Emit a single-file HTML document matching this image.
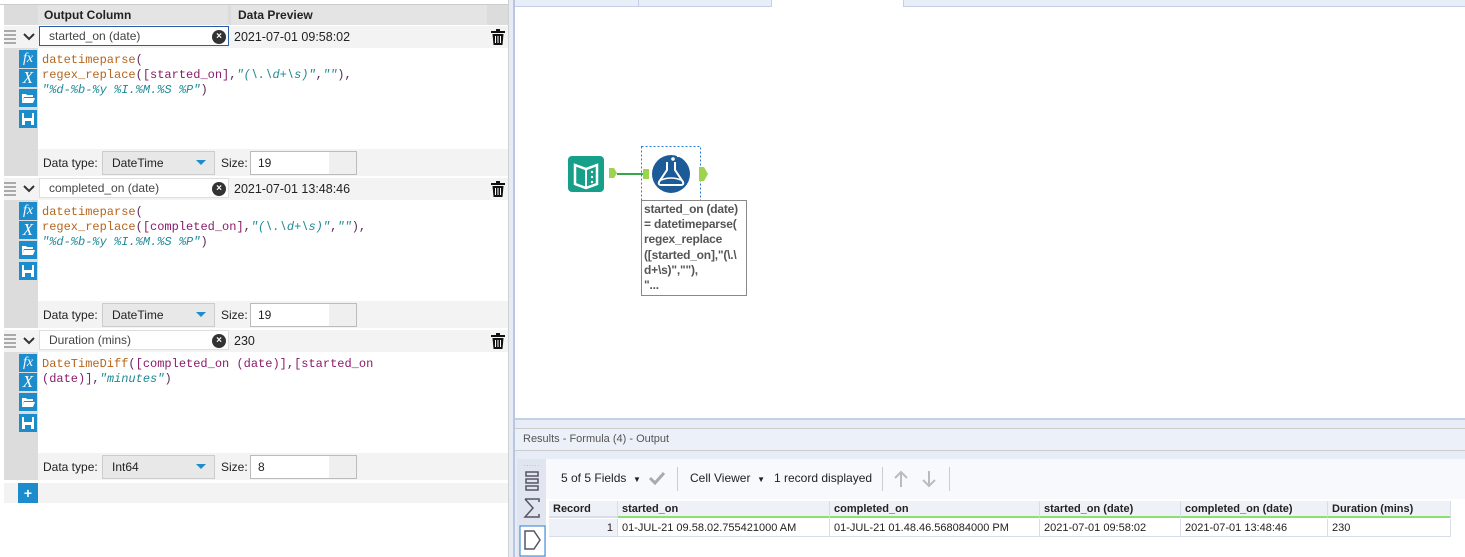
<!DOCTYPE html>
<html><head><meta charset="utf-8">
<style>
*{box-sizing:border-box;margin:0;padding:0}
body{width:1465px;height:557px;position:relative;overflow:hidden;background:#fff;font-family:"Liberation Sans",sans-serif;font-size:12px;color:#222}
.a{position:absolute}
.code{font-family:"Liberation Mono",monospace;font-size:12px;line-height:15px;white-space:pre}
.fn{color:#b5651d}.fd{color:#8b1a6b}.st{color:#1f8a96;font-style:italic}.p{color:#5a2a5a}
.ico{position:absolute;left:19px;width:18px;height:18px;background:#1c8ccc;color:#fff;text-align:center;font-family:"Liberation Serif",serif;font-style:italic;font-size:14px;line-height:18px}
.hdl{position:absolute;left:4px;width:12px;height:2px;background:#aaa}
.inp{position:absolute;left:39px;width:190px;height:20px;background:#fff;border:1px solid #ddd;padding-left:9px;line-height:18px;color:#444}
.clr{position:absolute;left:212px;width:14px;height:14px;border-radius:50%;background:#333;color:#fff;font-size:10px;line-height:14px;text-align:center;font-weight:bold}
.dd{position:absolute;left:102px;width:113px;height:24px;background:#e8e8e8;border:1px solid #ccc;padding-left:9px;line-height:22px}
.sz{position:absolute;left:250px;width:107px;height:24px;background:#fff;border:1px solid #bbb;padding-left:7px;line-height:22px}
.th{position:absolute;top:501px;height:17px;background:#eef1f8;border-right:1px solid #d8ddea;font-weight:bold;font-size:11px;line-height:16px;padding-left:4px;border-bottom:2px solid #8de070}
.td{position:absolute;top:519px;height:18px;background:#fff;border-right:1px solid #d8ddea;border-bottom:1px solid #d8ddea;font-size:11px;line-height:18px;padding-left:4px}
</style></head><body>

<svg width="0" height="0" style="position:absolute">
<defs>
<symbol id="trash" viewBox="0 0 14 16"><rect x="0" y="2" width="14" height="2" fill="#111"/><rect x="5" y="0" width="4" height="2" fill="#111"/><path d="M1.5 5 h11 l-1 11 h-9z" fill="#111"/><path d="M4.5 7 v7 M7 7 v7 M9.5 7 v7" stroke="#fff" stroke-width="1"/></symbol>
<symbol id="chev" viewBox="0 0 12 8"><path d="M1 1 L6 6 L11 1" fill="none" stroke="#333" stroke-width="2"/></symbol>
<symbol id="fold" viewBox="0 0 18 18"><rect width="18" height="18" fill="#1c8ccc"/><path d="M3 5 h4 l1 1 h6 v2 h-9 l-2 6 z" fill="#fff"/><path d="M5 9 h11 l-2 5 h-11z" fill="#fff"/></symbol>
<symbol id="save" viewBox="0 0 18 18"><rect width="18" height="18" fill="#1c8ccc"/><rect x="3" y="3" width="12" height="12" fill="#fff"/><rect x="5" y="3" width="8" height="5" fill="#1c8ccc"/><rect x="6" y="11" width="6" height="4" fill="#1c8ccc"/></symbol>
</defs></svg>

<!-- LEFT PANEL -->
<div class="a" style="left:0;top:0;width:508px;height:5px;background:#fff;border-bottom:1px solid #ccc"></div>
<div class="a" style="left:4px;top:5px;width:504px;height:20px;background:#dcdcdc"></div>
<div class="a" style="left:38px;top:5px;width:190px;height:20px;background:#e4e4e4;font-weight:bold;padding-left:6px;line-height:20px">Output Column</div>
<div class="a" style="left:231px;top:5px;width:256px;height:20px;background:#e4e4e4;font-weight:bold;padding-left:7px;line-height:20px">Data Preview</div>

<div class="a" style="left:4px;top:26px;width:504px;height:150px;background:#f3f3f3"></div>
<div class="a" style="left:4px;top:178px;width:504px;height:150px;background:#f3f3f3"></div>
<div class="a" style="left:4px;top:330px;width:504px;height:150px;background:#f3f3f3"></div>
<div class="a" style="left:4px;top:483px;width:504px;height:20px;background:#f3f3f3"></div>

<div class="a" style="left:4px;top:48px;width:34px;height:128px;background:#dcdcdc"></div>
<div class="a" style="left:4px;top:200px;width:34px;height:128px;background:#dcdcdc"></div>
<div class="a" style="left:4px;top:352px;width:34px;height:128px;background:#dcdcdc"></div>
<div class="a" style="left:38px;top:48px;width:470px;height:101px;background:#fff"></div>
<div class="a" style="left:38px;top:200px;width:470px;height:101px;background:#fff"></div>
<div class="a" style="left:38px;top:352px;width:470px;height:101px;background:#fff"></div>
<div class="a" style="left:38px;top:149px;width:470px;height:27px;background:#f3f3f3"></div>
<div class="a" style="left:38px;top:301px;width:470px;height:27px;background:#f3f3f3"></div>
<div class="a" style="left:38px;top:453px;width:470px;height:27px;background:#f3f3f3"></div>

<!-- Row 1 -->
<div class="hdl" style="top:30px"></div><div class="hdl" style="top:34px"></div><div class="hdl" style="top:38px"></div><div class="hdl" style="top:42px"></div>
<svg class="a" style="left:23px;top:33px" width="12" height="8"><use href="#chev"/></svg>
<div class="inp" style="top:26px;border-color:#2a5ca8">started_on (date)</div>
<div class="clr" style="top:30px">×</div>
<div class="a" style="left:234px;top:30px;font-size:12.5px">2021-07-01 09:58:02</div>
<svg class="a" style="left:491px;top:29px" width="14" height="16"><use href="#trash"/></svg>
<div class="ico" style="top:50px">fx</div><div class="ico" style="top:69px;font-size:17px">X</div>
<svg class="a" style="left:19px;top:89px" width="18" height="18"><use href="#fold"/></svg>
<svg class="a" style="left:19px;top:110px" width="18" height="18"><use href="#save"/></svg>
<div class="a code" style="left:42px;top:53px"><span class="fn">datetimeparse</span><span class="p">(</span>
<span class="fn">regex_replace</span><span class="p">(</span><span class="fd">[started_on]</span><span class="p">,</span><span class="st">"(\.\d+\s)"</span><span class="p">,</span><span class="st">""</span><span class="p">),</span>
<span class="st">"%d-%b-%y %I.%M.%S %P"</span><span class="p">)</span></div>
<div class="a" style="left:43px;top:156px">Data type:</div>
<div class="dd" style="top:151px">DateTime</div>
<div class="a" style="left:196px;top:160px;border:5px solid transparent;border-top:5px solid #1c8ccc;width:0;height:0"></div>
<div class="a" style="left:221px;top:156px">Size:</div>
<div class="sz" style="top:151px">19</div>
<div class="a" style="left:329px;top:152px;width:27px;height:22px;background:#efefef"></div>

<!-- Row 2 -->
<div class="hdl" style="top:182px"></div><div class="hdl" style="top:186px"></div><div class="hdl" style="top:190px"></div><div class="hdl" style="top:194px"></div>
<svg class="a" style="left:23px;top:185px" width="12" height="8"><use href="#chev"/></svg>
<div class="inp" style="top:178px">completed_on (date)</div>
<div class="clr" style="top:182px">×</div>
<div class="a" style="left:234px;top:182px;font-size:12.5px">2021-07-01 13:48:46</div>
<svg class="a" style="left:491px;top:181px" width="14" height="16"><use href="#trash"/></svg>
<div class="ico" style="top:202px">fx</div><div class="ico" style="top:221px;font-size:17px">X</div>
<svg class="a" style="left:19px;top:241px" width="18" height="18"><use href="#fold"/></svg>
<svg class="a" style="left:19px;top:262px" width="18" height="18"><use href="#save"/></svg>
<div class="a code" style="left:42px;top:205px"><span class="fn">datetimeparse</span><span class="p">(</span>
<span class="fn">regex_replace</span><span class="p">(</span><span class="fd">[completed_on]</span><span class="p">,</span><span class="st">"(\.\d+\s)"</span><span class="p">,</span><span class="st">""</span><span class="p">),</span>
<span class="st">"%d-%b-%y %I.%M.%S %P"</span><span class="p">)</span></div>
<div class="a" style="left:43px;top:308px">Data type:</div>
<div class="dd" style="top:303px">DateTime</div>
<div class="a" style="left:196px;top:312px;border:5px solid transparent;border-top:5px solid #1c8ccc;width:0;height:0"></div>
<div class="a" style="left:221px;top:308px">Size:</div>
<div class="sz" style="top:303px">19</div>
<div class="a" style="left:329px;top:304px;width:27px;height:22px;background:#efefef"></div>

<!-- Row 3 -->
<div class="hdl" style="top:334px"></div><div class="hdl" style="top:338px"></div><div class="hdl" style="top:342px"></div><div class="hdl" style="top:346px"></div>
<svg class="a" style="left:23px;top:337px" width="12" height="8"><use href="#chev"/></svg>
<div class="inp" style="top:330px">Duration (mins)</div>
<div class="clr" style="top:334px">×</div>
<div class="a" style="left:234px;top:334px;font-size:12.5px">230</div>
<svg class="a" style="left:491px;top:333px" width="14" height="16"><use href="#trash"/></svg>
<div class="ico" style="top:354px">fx</div><div class="ico" style="top:373px;font-size:17px">X</div>
<svg class="a" style="left:19px;top:393px" width="18" height="18"><use href="#fold"/></svg>
<svg class="a" style="left:19px;top:414px" width="18" height="18"><use href="#save"/></svg>
<div class="a code" style="left:42px;top:357px"><span class="fn">DateTimeDiff</span><span class="p">(</span><span class="fd">[completed_on (date)]</span><span class="p">,</span><span class="fd">[started_on</span>
<span class="fd">(date)]</span><span class="p">,</span><span class="st">"minutes"</span><span class="p">)</span></div>
<div class="a" style="left:43px;top:460px">Data type:</div>
<div class="dd" style="top:455px">Int64</div>
<div class="a" style="left:196px;top:464px;border:5px solid transparent;border-top:5px solid #1c8ccc;width:0;height:0"></div>
<div class="a" style="left:221px;top:460px">Size:</div>
<div class="sz" style="top:455px">8</div>
<div class="a" style="left:329px;top:456px;width:27px;height:22px;background:#efefef"></div>

<div class="a" style="left:18px;top:483px;width:20px;height:20px;background:#1c8ccc;color:#fff;text-align:center;font-weight:bold;line-height:20px;font-size:14px">+</div>

<!-- divider -->
<div class="a" style="left:508px;top:0;width:7px;height:557px;background:#e6ebf5;border-left:1px solid #d0d0d0;border-right:2px solid #b8c6e2"></div>

<!-- CANVAS -->
<div class="a" style="left:515px;top:0;width:257px;height:7px;background:#e8eef8;border-bottom:1px solid #c5d0e6;border-right:1px solid #c5d0e6"></div>
<div class="a" style="left:638px;top:0;width:1px;height:6px;background:#c5d0e6"></div>
<div class="a" style="left:903px;top:0;width:562px;height:7px;background:#e8eef8;border-bottom:1px solid #c5d0e6;border-left:1px solid #c5d0e6"></div>

<svg class="a" style="left:555px;top:140px" width="200" height="160">
  <rect x="13" y="16" width="36" height="36" rx="4" fill="#16a08a"/>
  <path d="M20 25 L31 29 L42 25 L42 44 L31 48 L20 44 Z" fill="none" stroke="#fff" stroke-width="2.5"/>
  <line x1="31" y1="29" x2="31" y2="48" stroke="#fff" stroke-width="2"/>
  <circle cx="37" cy="32" r="1.2" fill="#fff"/><circle cx="37" cy="37" r="1.2" fill="#fff"/><circle cx="37" cy="42" r="1.2" fill="#fff"/>
  <path d="M54 28 h5 l3 5 l-3 5 h-5z" fill="#9dd44f"/>
  <line x1="62" y1="34" x2="88" y2="34" stroke="#3aa64a" stroke-width="2"/>
  <rect x="88" y="29" width="6" height="10" fill="#9dd44f"/>
  <rect x="86.5" y="6.5" width="59" height="54" fill="none" stroke="#2a7fd4" stroke-dasharray="2,2"/>
  <circle cx="116" cy="34" r="19" fill="#1c5a98"/>
  <path d="M112 22 v8 l-8 12 q-1 3 2 3 h20 q3 0 2-3 l-8-12 v-8" fill="none" stroke="#fff" stroke-width="2"/>
  <path d="M106 40 q10 -4 20 0" fill="none" stroke="#fff" stroke-width="1.5"/>
  <circle cx="118" cy="19" r="1.8" fill="#fff"/><circle cx="123" cy="16" r="1.2" fill="#fff"/>
  <path d="M144 27 h5 l4 7 l-4 7 h-5z" fill="#9dd44f"/>
  <rect x="86.5" y="60.5" width="105" height="95" fill="#fff" stroke="#888"/>
</svg>
<div class="a" style="left:644px;top:202px;width:104px;font-size:12px;line-height:15.2px;color:#555;font-weight:bold;letter-spacing:-0.2px">started_on (date)<br>= datetimeparse(<br>regex_replace<br>([started_on],"(\.\<br>d+\s)",""),<br>"...</div>

<!-- RESULTS -->
<div class="a" style="left:515px;top:418px;width:950px;height:139px;background:#e8ecf6;border-top:2px solid #c5d0e6"></div>
<div class="a" style="left:515px;top:428px;width:950px;height:23px;background:#ecf0f8;border-top:1px solid #ccc;border-bottom:1px solid #ccc;padding-left:8px;line-height:21px;font-size:11px;color:#555">Results - Formula (4) - Output</div>
<div class="a" style="left:546px;top:459px;width:919px;height:98px;background:#fff"></div>
<div class="a" style="left:546px;top:459px;width:919px;height:40px;background:#f7f9fd"></div>
<div class="a" style="left:517px;top:459px;width:29px;height:98px;background:#e0e5f0"></div>
<div class="a" style="left:524px;top:462px;font-size:6px;color:#999;letter-spacing:1px">......</div>
<svg class="a" style="left:518px;top:468px" width="28" height="89">
  <g fill="none" stroke="#556" stroke-width="1.5">
    <rect x="8" y="4" width="12" height="4"/><rect x="8" y="11" width="12" height="4"/><rect x="8" y="18" width="12" height="4"/>
    <path d="M7 31 h14 v3 M7 31 l8 9 l-8 9 h14 v-3"/>
  </g>
  <rect x="2" y="58" width="25" height="30" fill="#fff" stroke="#2a7fd4"/>
  <path d="M7 63 h9 l6 9 l-6 9 h-9z" fill="none" stroke="#556" stroke-width="1.5"/>
</svg>
<div class="a" style="left:561px;top:471px;font-size:12px">5 of 5 Fields &nbsp;<span style="font-size:8px">▼</span></div>
<svg class="a" style="left:648px;top:471px" width="18" height="14"><path d="M2 7 l5 5 l9 -10" fill="none" stroke="#aaa" stroke-width="3"/></svg>
<div class="a" style="left:677px;top:467px;width:1px;height:24px;background:#ccc"></div>
<div class="a" style="left:690px;top:471px;font-size:12px">Cell Viewer &nbsp;<span style="font-size:8px">▼</span></div>
<div class="a" style="left:774px;top:471px;font-size:12px">1 record displayed</div>
<div class="a" style="left:882px;top:467px;width:1px;height:24px;background:#ccc"></div>
<svg class="a" style="left:892px;top:469px" width="50" height="20"><g fill="none" stroke="#bbb" stroke-width="2"><path d="M9 18 V3 M3 9 L9 3 L15 9"/><path d="M37 2 V17 M31 11 L37 17 L43 11"/></g></svg>
<div class="a" style="left:949px;top:467px;width:1px;height:24px;background:#ccc"></div>

<div class="th" style="left:549px;width:69px;border-bottom-color:#d8ddea">Record</div>
<div class="th" style="left:618px;width:212px">started_on</div>
<div class="th" style="left:830px;width:210px">completed_on</div>
<div class="th" style="left:1040px;width:141px">started_on (date)</div>
<div class="th" style="left:1181px;width:147px">completed_on (date)</div>
<div class="th" style="left:1328px;width:123px">Duration (mins)</div>
<div class="td" style="left:549px;width:69px;background:#eef1f8;text-align:right;padding-right:4px">1</div>
<div class="td" style="left:618px;width:212px">01-JUL-21 09.58.02.755421000 AM</div>
<div class="td" style="left:830px;width:210px">01-JUL-21 01.48.46.568084000 PM</div>
<div class="td" style="left:1040px;width:141px">2021-07-01 09:58:02</div>
<div class="td" style="left:1181px;width:147px">2021-07-01 13:48:46</div>
<div class="td" style="left:1328px;width:123px">230</div>
</body></html>
